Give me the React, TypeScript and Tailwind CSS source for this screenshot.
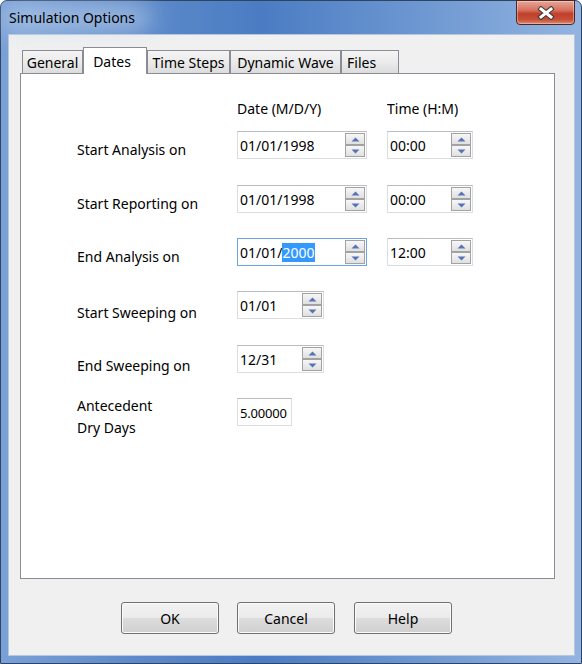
import React from 'react';

const ui = "[font-family:'Noto_Sans',sans-serif]";

function Arrow({ up }: { up: boolean }) {
  return (
    <svg width="9" height="5" viewBox="0 0 9 5">
      <polygon points={up ? '0.5,4.5 4.5,0.5 8.5,4.5' : '0.5,0.5 4.5,4.5 8.5,0.5'} fill="#5674b4" />
    </svg>
  );
}

function Spin() {
  return (
    <div className="ml-auto mr-[1px] flex h-[24px] w-[20px] shrink-0 flex-col">
      <div className="flex h-[12px] items-center justify-center border border-[#a2a2a2] bg-gradient-to-b from-[#f7f7f7] to-[#e0e0e0]">
        <Arrow up />
      </div>
      <div className="flex h-[12px] items-center justify-center border border-[#a2a2a2] bg-gradient-to-b from-[#f7f7f7] to-[#e0e0e0]">
        <Arrow up={false} />
      </div>
    </div>
  );
}

interface FieldProps {
  value: string;
  width: string;
  spin?: boolean;
  focused?: boolean;
  selected?: string;
  small?: boolean;
}

function Field({ value, width, spin = true, focused = false, selected, small = false }: FieldProps) {
  return (
    <div
      className={`flex h-[28px] shrink-0 items-center overflow-hidden bg-white pl-[2px] ${width} ${
        focused ? 'border border-[#6aa5e2]' : 'border border-[#dadde2] border-t-[#b9bcc2]'
      }`}
    >
      <span className={`whitespace-nowrap pt-[2px] leading-[18px] text-black ${small ? 'text-[13px] tracking-[-0.2px]' : 'text-[14px]'}`}>
        {value}
        {selected && <span className="bg-[#3399ff] text-white">{selected}</span>}
      </span>
      {spin && <Spin />}
    </div>
  );
}

function Tab({ label, width, active = false }: { label: string; width: string; active?: boolean }) {
  if (active) {
    return (
      <div className={`flex h-[27px] items-start justify-center border border-b-0 border-[#898c95] bg-white pt-[3px] text-[14px] ${width}`}>
        <span className="pr-[6px]">{label}</span>
      </div>
    );
  }
  return (
    <div
      className={`flex h-[24px] items-center justify-center border border-[#898c95] bg-gradient-to-b from-[#f4f4f4] via-[#ebebeb] to-[#dcdcdc] text-[14px] ${width}`}
    >
      {label}
    </div>
  );
}

function Button({ label, className = '' }: { label: string; className?: string }) {
  return (
    <div
      className={`flex h-[32px] w-[98px] items-center justify-center rounded-[3px] border border-[#707070] bg-[linear-gradient(180deg,#f2f2f2_0%,#ebebeb_50%,#dddddd_51%,#cfcfcf_100%)] text-[14px] text-black shadow-[inset_0_0_0_1px_#fbfbfb] ${className}`}
    >
      {label}
    </div>
  );
}

export default function App() {
  return (
    <div className={`${ui} h-[664px] w-[582px] overflow-hidden bg-white`}>
      <div className="relative flex h-[664px] w-[582px] flex-col rounded-t-[7px] border border-[#2f4462] bg-[linear-gradient(90deg,#7aa1d7_0%,#5e8bca_22%,#4b7cc3_45%,#6a95d0_70%,#93b4e0_100%)]">
        {/* title bar */}
        <div className="relative flex h-[33px] shrink-0 items-center pl-[8px]">
          <div className="absolute left-[0px] top-[4px] h-[26px] w-[150px] rounded-full bg-[#c9daf0] opacity-60 blur-md" />
          <span className="relative pb-[1px] text-[14px] text-black">Simulation Options</span>
          <div className="absolute right-[6px] top-[-1px] flex h-[25px] w-[59px] items-center justify-center rounded-b-[4px] border border-[#4e2620] bg-[linear-gradient(180deg,#e6a799_0%,#d7715e_40%,#c0402b_55%,#c74d36_80%,#dd8a74_100%)] shadow-[inset_0_0_0_1px_rgba(255,255,255,0.35)]">
            <svg width="18" height="14" viewBox="0 0 18 14">
              <path d="M4 3 L14 11 M14 3 L4 11" stroke="#3b3b3b" strokeWidth="5" strokeLinecap="square" />
              <path d="M4 3 L14 11 M14 3 L4 11" stroke="#ffffff" strokeWidth="3" strokeLinecap="square" />
            </svg>
          </div>
        </div>

        {/* client area */}
        <div className="ml-[7px] flex h-[622px] w-[567px] flex-col border border-[#b7c6da] bg-[#f0f0f0] pl-[11px] pt-[12px] text-black">
          <div className="relative z-10 -mb-px flex h-[27px] items-end pl-[2px]">
            <Tab label="General" width="w-[61px]" />
            <Tab label="Dates" width="w-[64px]" active />
            <Tab label="Time Steps" width="w-[83px]" />
            <Tab label="Dynamic Wave" width="w-[111px]" />
            <div className="flex h-[24px] w-[58px] items-center border border-[#898c95] bg-gradient-to-b from-[#f4f4f4] via-[#ebebeb] to-[#dcdcdc] pl-[5px] text-[14px]">
              Files
            </div>
          </div>

          <div className="h-[506px] w-[535px] border border-[#898c95] bg-white pt-[26px] text-[14px]">
            <div className="flex h-[18px] pl-[216px] leading-[18px]">
              <span className="w-[150px]">Date (M/D/Y)</span>
              <span>Time (H:M)</span>
            </div>

            <div className="mt-[13px] flex h-[28px] pl-[56px]">
              <span className="mt-[10px] w-[160px] shrink-0 leading-[18px]">Start Analysis on</span>
              <Field value="01/01/1998" width="w-[130px]" />
              <div className="ml-[20px]">
                <Field value="00:00" width="w-[86px]" />
              </div>
            </div>

            <div className="mt-[26px] flex h-[28px] pl-[56px]">
              <span className="mt-[10px] w-[160px] shrink-0 leading-[18px]">Start Reporting on</span>
              <Field value="01/01/1998" width="w-[130px]" />
              <div className="ml-[20px]">
                <Field value="00:00" width="w-[86px]" />
              </div>
            </div>

            <div className="mt-[25px] flex h-[28px] pl-[56px]">
              <span className="mt-[10px] w-[160px] shrink-0 leading-[18px]">End Analysis on</span>
              <Field value="01/01/" selected="2000" width="w-[130px]" focused />
              <div className="ml-[20px]">
                <Field value="12:00" width="w-[86px]" />
              </div>
            </div>

            <div className="mt-[25px] flex h-[28px] pl-[56px]">
              <span className="mt-[13px] w-[160px] shrink-0 leading-[18px]">Start Sweeping on</span>
              <Field value="01/01" width="w-[87px]" />
            </div>

            <div className="mt-[26px] flex h-[28px] pl-[56px]">
              <span className="mt-[12px] w-[160px] shrink-0 leading-[18px]">End Sweeping on</span>
              <Field value="12/31" width="w-[87px]" />
            </div>

            <div className="mt-[25px] flex h-[28px] pl-[56px]">
              <span className="-mt-[3px] w-[160px] shrink-0 leading-[22px]">
                Antecedent
                <br />
                Dry Days
              </span>
              <Field value="5.00000" width="w-[55px]" spin={false} small />
            </div>
          </div>

          <div className="ml-[101px] mt-[23px] flex gap-[18px]">
            <Button label="OK" />
            <Button label="Cancel" />
            <Button label="Help" className="ml-px" />
          </div>
        </div>
      </div>
    </div>
  );
}
